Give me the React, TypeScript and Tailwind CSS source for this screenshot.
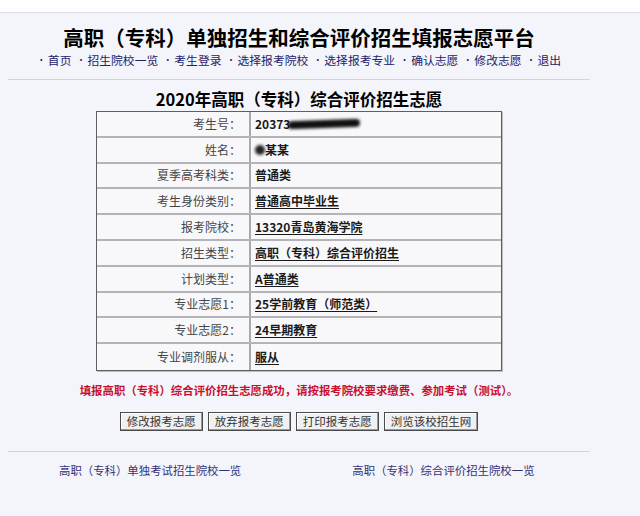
import React from 'react';

type Row = {
  label: string;
  value?: string;
  link?: boolean;
  kind?: 'id' | 'name';
};

const rows: Row[] = [
  { label: '考生号：', kind: 'id' },
  { label: '姓名：', kind: 'name' },
  { label: '夏季高考科类：', value: '普通类' },
  { label: '考生身份类别：', value: '普通高中毕业生', link: true },
  { label: '报考院校：', value: '13320青岛黄海学院', link: true },
  { label: '招生类型：', value: '高职（专科）综合评价招生', link: true },
  { label: '计划类型：', value: 'A普通类', link: true },
  { label: '专业志愿1：', value: '25学前教育（师范类）', link: true },
  { label: '专业志愿2：', value: '24早期教育', link: true },
  { label: '专业调剂服从：', value: '服从', link: true },
];

const navItems = ['首页', '招生院校一览', '考生登录', '选择报考院校', '选择报考专业', '确认志愿', '修改志愿', '退出'];

const buttons = ['修改报考志愿', '放弃报考志愿', '打印报考志愿', '浏览该校招生网'];

const font = { fontFamily: '"Noto Sans CJK SC", "Liberation Sans", sans-serif' };

function Value({ row }: { row: Row }) {
  if (row.kind === 'id') {
    return (
      <span className="flex items-center">
        <span className="font-bold">20373</span>
        {/* masked digits */}
        <span className="ml-[-2px] h-[8px] w-[72px] -rotate-2 rounded-full bg-[#111] blur-[1.5px]" />
      </span>
    );
  }
  if (row.kind === 'name') {
    return (
      <span className="flex items-center">
        <span className="h-[10px] w-[10px] rounded-full bg-[#222] blur-[1.5px]" />
        <span className="font-bold">某某</span>
      </span>
    );
  }
  return <span className={row.link ? 'font-bold underline underline-offset-2' : 'font-bold'}>{row.value}</span>;
}

export default function App() {
  return (
    <div className="h-[516px] w-[640px] overflow-hidden bg-[#f4f4fb] text-[#222]" style={font}>
      <div className="h-[13px] border-b border-[#dcdce4] bg-white" />

      <div className="ml-[8px] w-[582px]">
        {/* header */}
        <div className="flex flex-col items-center pt-[10px]">
          <h1 className="text-[20.5px] font-bold leading-[28px] text-black">高职（专科）单独招生和综合评价招生填报志愿平台</h1>
          <div className="mt-[1px] flex items-center gap-[5px] text-[11.8px] leading-[16px] text-[#22226a]">
            {navItems.map((item) => (
              <span key={item} className="flex items-center">
                <span className="mr-[2px] text-[9px]">•</span>
                {item}
              </span>
            ))}
          </div>
        </div>
        <div className="mt-[11px] border-t border-[#d4d4de]" />

        {/* form summary */}
        <div className="flex flex-col items-center">
          <h2 className="mt-[9px] text-[16.5px] font-bold leading-[20px] text-black">2020年高职（专科）综合评价招生志愿</h2>
          <div className="mt-[2px] w-[406px] border border-[#5f5f5f] bg-[#f8f8fb] shadow-[1px_1px_0_#bdbdbd]">
            {rows.map((row, i) => (
              <div
                key={row.label}
                className={`flex h-[25.8px] text-[12px] ${i < rows.length - 1 ? 'border-b-2 border-[#b4b4b8]' : ''}`}
              >
                <div className="flex w-[154px] items-center justify-end border-r-2 border-[#a8a8ae] pr-[8px] text-[#444]">
                  {row.label}
                </div>
                <div className="flex flex-1 items-center pl-[4px] text-[#1a1a1a]">
                  <Value row={row} />
                </div>
              </div>
            ))}
          </div>

          <p className="mt-[11px] text-[11.4px] font-semibold leading-[16px] text-[#c8102e]">
            填报高职（专科）综合评价招生志愿成功，请按报考院校要求缴费、参加考试（测试）。
          </p>

          <div className="mt-[14px] flex gap-[5px]">
            {buttons.map((label) => (
              <button
                key={label}
                className="flex h-[19px] items-center border border-[#4a4a4a] bg-[#f0f0f0] px-[6px] text-[11.5px] leading-none text-[#333] shadow-[inset_-1px_-1px_0_#9a9a9a,inset_1px_1px_0_#ffffff]"
              >
                {label}
              </button>
            ))}
          </div>
        </div>

        <div className="mt-[20px] border-t border-[#d4d4de]" />

        {/* footer links */}
        <div className="mt-[10px] flex text-[11.4px] leading-[16px] text-[#333377]">
          <span className="ml-[51px]">高职（专科）单独考试招生院校一览</span>
          <span className="ml-[111px]">高职（专科）综合评价招生院校一览</span>
        </div>
      </div>
    </div>
  );
}
